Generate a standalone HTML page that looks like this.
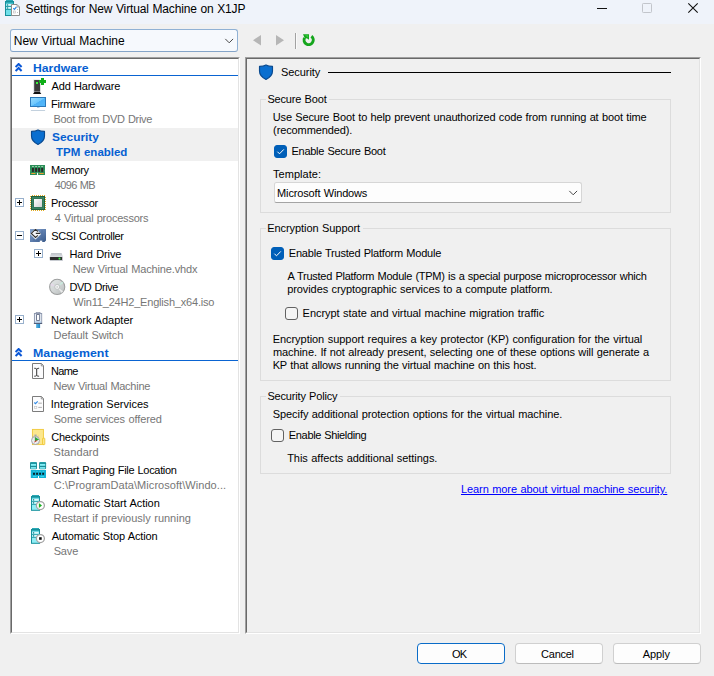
<!DOCTYPE html>
<html lang="en"><head><meta charset="utf-8"><title>Settings for New Virtual Machine on X1JP</title>
<style>
html,body{margin:0;padding:0}
body{width:714px;height:676px;overflow:hidden;background:#f0f0f0;position:relative;font-family:"Liberation Sans",sans-serif;font-size:11px;color:#000}
.t{position:absolute;white-space:nowrap;display:block;font-size:11px;line-height:12px;transform-origin:0 50%;word-spacing:0.5px}
.a{position:absolute;box-sizing:border-box}
.m{color:#000}
.s{color:#767676}
.h{color:#0560d2;font-weight:bold}
.sel{color:#0560d2;font-weight:bold}
.lnk{color:#0000ff;text-decoration:underline}
.ttl{color:#000}
.ex{width:9px;height:9px;border:1px solid #98b0cc;background:#fff}
.ex i{position:absolute;background:#000;display:block}
.ex .hh{left:1px;top:3px;width:5px;height:1px}
.ex .vv{left:3px;top:1px;width:1px;height:5px}
.gb{border:1px solid #dcdcdc}
.gl{background:#f0f0f0}
.cb{width:13px;height:13px;border:1px solid #626262;border-radius:3px;background:#f5f5f5}
.cb.on{background:#005fb8;border-color:#005fb8}
.cb svg{position:absolute;left:-1px;top:-1px}
.btn{background:#fdfdfd;border:1px solid #d0d0d0;border-bottom-color:#bcbcbc;border-radius:4px}

</style></head>
<body>
<!-- title bar -->
<div class="a" style="left:0;top:0;width:714px;height:24px;background:#eff3fa"></div>
<svg class="a" style="left:5px;top:0" width="16" height="16" viewBox="0 0 16 16">
  <rect x="1" y="0" width="7" height="2" fill="#2aa9b5"/>
  <rect x="0.5" y="1.5" width="8" height="14" fill="#6fe0ea" stroke="#17909c"/>
  <rect x="1" y="2" width="7" height="1.5" fill="#2aa9b5"/>
  <rect x="1.5" y="4" width="6" height="1.6" fill="#d8f8fb"/><rect x="2" y="4.4" width="1.2" height="1.2" fill="#0c6a75"/>
  <rect x="1.5" y="7" width="6" height="1.6" fill="#d8f8fb"/><rect x="2" y="7.4" width="1.2" height="1.2" fill="#0c6a75"/>
  <rect x="1" y="6" width="7" height="0.8" fill="#17909c"/><rect x="1" y="9" width="7" height="0.8" fill="#17909c"/>
  <path d="M6.5 4.5h5.5l2.5 2.5v8.5h-8z" fill="#fff" stroke="#8c8c8c"/>
  <path d="M12 4.5v2.5h2.500" fill="none" stroke="#9a9a9a" stroke-width="0.8"/>
  <path d="M8.300 8.200l1.100 1.100l2-2.300" fill="none" stroke="#2f8ae6" stroke-width="1.200"/>
  <rect x="8.500" y="11" width="2" height="2" fill="none" stroke="#c4c4c4" stroke-width="0.7"/>
  <rect x="12" y="9.200" width="1" height="0.8" fill="#b0b0b0"/><rect x="12" y="12" width="1" height="0.8" fill="#b0b0b0"/>
</svg>
<svg class="a" style="left:590px;top:0" width="120" height="20" viewBox="0 0 120 20">
  <rect x="7" y="8" width="10" height="1" fill="#111" shape-rendering="crispEdges"/>
  <rect x="52.500" y="3.500" width="9" height="9" rx="0.800" fill="none" stroke="#c2c5cb"/>
  <path d="M98.300 3.300l9.400 9.400M107.700 3.300l-9.400 9.400" stroke="#111" stroke-width="1.100" fill="none"/>
</svg>

<!-- combobox -->
<div class="a" style="left:10px;top:29px;width:228px;height:23px;background:#f6f9fd;border:1px solid #90b1d4;border-bottom-color:#84a4c8;border-radius:3px"></div>
<svg class="a" style="left:224px;top:37px" width="11" height="8" viewBox="0 0 11 8"><path d="M1.300 1.900l3.900 3.900l3.900-3.900" fill="none" stroke="#484848" stroke-width="1"/></svg>

<!-- toolbar -->
<svg class="a" style="left:250px;top:32px" width="70" height="18" viewBox="0 0 70 18">
  <path d="M11 3v10.500l-8-5.250z" fill="#b6b6b6"/>
  <path d="M26 3v10.500l8-5.250z" fill="#b6b6b6"/>
  <rect x="45" y="1" width="1" height="16" fill="#a2a2a2" shape-rendering="crispEdges"/><rect x="46" y="1" width="1" height="16" fill="#fafafa" shape-rendering="crispEdges"/>
  <path d="M61.400 4.300A4.600 4.600 0 1 1 54.550 5.900" fill="none" stroke="#15a61d" stroke-width="3"/>
  <path d="M53 2.200h6v5.600l-2.200-1.600l-1.800 0.500z" fill="#15a61d"/>
  <path d="M54.800 3.200h3.400v2.500z" fill="#3ddc44" opacity="0.800"/>
</svg>

<!-- panels -->
<div class="a" style="left:10px;top:57px;width:230px;height:577px;background:#fff;border:1px solid #a0a0a0;border-right-color:#fff;border-bottom-color:#fff"></div>
<div class="a" style="left:11px;top:58px;width:228px;height:575px;border:1px solid #696969;border-right-color:#e3e3e3;border-bottom-color:#e3e3e3"></div>
<div class="a" style="left:245px;top:57px;width:456px;height:577px;border:1px solid #a0a0a0;border-right-color:#fff;border-bottom-color:#fff"></div>
<div class="a" style="left:246px;top:58px;width:454px;height:575px;border:1px solid #696969;border-right-color:#e3e3e3;border-bottom-color:#e3e3e3"></div>

<!-- selected row -->
<div class="a" style="left:12px;top:128px;width:226px;height:33px;background:#f0f0f0"></div>

<!-- headers -->
<div class="a" style="left:12px;top:75px;width:226px;height:1px;background:#0a64d2"></div>
<div class="a" style="left:12px;top:360px;width:226px;height:1px;background:#0a64d2"></div>
<svg class="a" style="left:15px;top:63px" width="8" height="9" viewBox="0 0 8 9"><path d="M0.600 4l3-3l3 3M0.600 8l3-3l3 3" fill="none" stroke="#0a57d6" stroke-width="2"/></svg>
<svg class="a" style="left:15px;top:348px" width="8" height="9" viewBox="0 0 8 9"><path d="M0.600 4l3-3l3 3M0.600 8l3-3l3 3" fill="none" stroke="#0a57d6" stroke-width="2"/></svg>

<!-- expanders -->
<div class="a ex" style="left:15px;top:198px"><i class="hh"></i><i class="vv"></i></div>
<div class="a ex" style="left:15px;top:231px"><i class="hh"></i></div>
<div class="a ex" style="left:34px;top:249px"><i class="hh"></i><i class="vv"></i></div>
<div class="a ex" style="left:15px;top:315px"><i class="hh"></i><i class="vv"></i></div>
<!-- Add Hardware -->
<svg class="a" style="left:30px;top:77px" width="18" height="18" viewBox="0 0 18 18">
  <rect x="3.400" y="2.600" width="7" height="12.600" fill="#d6d9e2"/>
  <rect x="4.200" y="3" width="5.900" height="11.600" fill="#3c3c3c"/>
  <path d="M3 17l1.400-1.900h5.500l1.400 1.900z" fill="#121212"/>
  <rect x="6" y="5" width="2" height="2" fill="#3af03e"/>
  <path d="M11 1h3v2h2v3h-2v2h-3v-2h-2v-3h2z" fill="#10ae18"/>
</svg>
<!-- Firmware -->
<svg class="a" style="left:29px;top:96px" width="19" height="17" viewBox="0 0 19 17">
  <defs><linearGradient id="fw" x1="0" y1="0" x2="1" y2="1"><stop offset="0" stop-color="#9adcff"/><stop offset="0.500" stop-color="#6cc6fc"/><stop offset="0.520" stop-color="#4db2f7"/><stop offset="1" stop-color="#56b8f9"/></linearGradient></defs>
  <rect x="1.500" y="1.500" width="15" height="9" fill="url(#fw)" stroke="#2b79ba"/>
  <rect x="8" y="11" width="2.500" height="0.900" fill="#a8c4dc"/>
  <rect x="1.800" y="14" width="14.400" height="1" rx="0.500" fill="#c3d1de"/>
</svg>
<!-- Security shield (tree) -->
<svg class="a" style="left:30px;top:127.500px" width="16" height="18" viewBox="0 0 16 18">
  <path d="M8 1.900C9.800 2.900 12 3.400 14.500 3.400V8C14.500 11.800 11.800 14.600 8 16.400C4.200 14.600 1.500 11.800 1.500 8V3.400C4 3.400 6.200 2.900 8 1.900z" fill="#0a6fd0" stroke="#0a4a90" stroke-width="1.150" stroke-linejoin="round"/>
</svg>
<!-- Memory -->
<svg class="a" style="left:30px;top:164px" width="16" height="12" viewBox="0 0 16 12">
  <path d="M0 1h15v5.500l-0.500 0.400l0.500 0.400v3.700h-6.900v-2.200h-1.100v2.200h-7v-3.700l0.500-0.400l-0.500-0.400z" fill="#2b8d58"/>
  <g fill="#a9d6b4"><rect x="2" y="2.100" width="1.900" height="0.900"/><rect x="5.100" y="2.100" width="1.900" height="0.900"/><rect x="8.100" y="2.100" width="1.900" height="0.900"/><rect x="11.200" y="2.100" width="1.900" height="0.900"/></g>
  <g fill="#2e2428"><rect x="2" y="4" width="1.900" height="3.900"/><rect x="5.100" y="4" width="1.900" height="3.900"/><rect x="8.100" y="4" width="1.900" height="3.900"/><rect x="11.200" y="4" width="1.900" height="3.900"/></g>
  <g fill="#f0a030"><rect x="1.300" y="9" width="4.100" height="1"/><rect x="9.400" y="9" width="4.300" height="1"/></g>
</svg>
<!-- Processor -->
<svg class="a" style="left:30px;top:195px" width="16" height="16" viewBox="0 0 16 16">
  <defs><linearGradient id="cpu" x1="0" y1="0" x2="1" y2="1"><stop offset="0" stop-color="#ffffff"/><stop offset="0.500" stop-color="#e8e8e8"/><stop offset="1" stop-color="#d2d2d2"/></linearGradient></defs>
  <g fill="#e2aa22" shape-rendering="crispEdges"><rect x="2" y="0" width="1" height="1"/><rect x="4" y="0" width="1" height="1"/><rect x="6" y="0" width="1" height="1"/><rect x="8" y="0" width="1" height="1"/><rect x="10" y="0" width="1" height="1"/><rect x="12" y="0" width="1" height="1"/><rect x="14" y="0" width="1" height="1"/><rect x="1" y="15" width="1" height="1"/><rect x="3" y="15" width="1" height="1"/><rect x="5" y="15" width="1" height="1"/><rect x="7" y="15" width="1" height="1"/><rect x="9" y="15" width="1" height="1"/><rect x="11" y="15" width="1" height="1"/><rect x="13" y="15" width="1" height="1"/><rect x="0" y="1" width="1" height="1"/><rect x="0" y="3" width="1" height="1"/><rect x="0" y="5" width="1" height="1"/><rect x="0" y="7" width="1" height="1"/><rect x="0" y="9" width="1" height="1"/><rect x="0" y="11" width="1" height="1"/><rect x="0" y="13" width="1" height="1"/><rect x="15" y="2" width="1" height="1"/><rect x="15" y="4" width="1" height="1"/><rect x="15" y="6" width="1" height="1"/><rect x="15" y="8" width="1" height="1"/><rect x="15" y="10" width="1" height="1"/><rect x="15" y="12" width="1" height="1"/><rect x="15" y="14" width="1" height="1"/></g>
  <rect x="1" y="1" width="14" height="14" fill="#21603f"/>
  <rect x="2" y="2" width="12" height="12" fill="#3a8463"/>
  <rect x="3" y="3" width="10" height="10" fill="#327858"/>
  <rect x="4" y="4" width="8" height="8" fill="url(#cpu)"/>
</svg>
<!-- SCSI -->
<svg class="a" style="left:30px;top:229px" width="16" height="14" viewBox="0 0 16 14">
  <defs><linearGradient id="sc" x1="0" y1="0" x2="1" y2="1"><stop offset="0" stop-color="#86a4d0"/><stop offset="0.600" stop-color="#5878a8"/><stop offset="1" stop-color="#385888"/></linearGradient></defs>
  <path d="M0 0h16v11.500l-1.500 1.500h-2.300v-1.500h-2.400v1.500h-9.800z" fill="url(#sc)"/>
  <path d="M12 1v10h-9" fill="none" stroke="#4a6a9c" stroke-width="0.800" opacity="0.700"/>
  <path d="M5.500 -0.600l5.600 5.600l-5.600 5.600l-5.600-5.600z" fill="#f4f6fa"/>
  <path d="M7.900 2.500l-2.400-2.200l-4.200 4.100l4.200 4.100l2.400-2.200M5.800 4.400h4.500" fill="none" stroke="#303030" stroke-width="1.100"/>
</svg>
<!-- Hard drive -->
<svg class="a" style="left:48px;top:252px" width="17" height="10" viewBox="0 0 17 10">
  <defs><linearGradient id="hd" x1="0" y1="0" x2="0" y2="1"><stop offset="0" stop-color="#bcc0c6"/><stop offset="0.500" stop-color="#dcdfe3"/><stop offset="1" stop-color="#c6cad0"/></linearGradient></defs>
  <path d="M3.200 0.900h10.400l1.400 4v3.400a0.600 0.600 0 0 1 -0.600 0.600h-12a0.600 0.600 0 0 1 -0.600-0.600v-3.400z" fill="url(#hd)"/>
  <rect x="1.900" y="5.100" width="12.200" height="2.900" rx="0.400" fill="#2c2c2c"/>
  <circle cx="11.500" cy="6.550" r="1.500" fill="#30e840" opacity="0.300"/>
  <circle cx="11.500" cy="6.550" r="0.850" fill="#38f048"/>
</svg>
<!-- DVD -->
<svg class="a" style="left:48px;top:278px" width="18" height="18" viewBox="0 0 18 18">
  <defs><linearGradient id="dv" x1="0" y1="0" x2="1" y2="1"><stop offset="0" stop-color="#e4e8e8"/><stop offset="0.500" stop-color="#d2d6d6"/><stop offset="1" stop-color="#b6baba"/></linearGradient></defs>
  <circle cx="9.200" cy="8.900" r="7.600" fill="url(#dv)" stroke="#9c9e9e" stroke-width="1.050"/>
  <path d="M9.200 8.900l-7-1.500a7.500 7.500 0 0 1 1-2.500z" fill="#e8d8ec" opacity="0.700"/>
  <path d="M9.200 8.900l5-5.500a7.500 7.500 0 0 1 1.300 1.500z" fill="#c8f0e0" opacity="0.800"/>
  <path d="M9.200 8.900l4.500 6a7.500 7.500 0 0 0 1.500-1.600z" fill="#f4f4f4" opacity="0.800"/>
  <circle cx="9.200" cy="8.900" r="2.500" fill="#f2f4f4" stroke="#b8baba" stroke-width="0.800"/>
  <circle cx="9.200" cy="8.900" r="0.900" fill="#cfd1d1"/>
</svg>
<!-- Network adapter -->
<svg class="a" style="left:33px;top:312px" width="10" height="17" viewBox="0 0 10 17">
  <defs><linearGradient id="nc" x1="0" y1="0" x2="1" y2="0"><stop offset="0" stop-color="#58b4e4"/><stop offset="1" stop-color="#1c84c4"/></linearGradient></defs>
  <rect x="3.200" y="0.400" width="3.800" height="1.600" fill="#f2f5fa" stroke="#8a94aa" stroke-width="0.800"/>
  <rect x="1.400" y="1.500" width="7.300" height="10" fill="#d2dbec" stroke="#8a94aa" stroke-width="0.900"/>
  <rect x="2" y="2.200" width="1" height="8" fill="#eef2f9"/><rect x="7.100" y="2.200" width="1" height="8" fill="#eef2f9"/>
  <path d="M3.500 2.500v6h3.100v-6z" fill="#fbfcfe" stroke="#667088" stroke-width="0.900"/>
  <rect x="2" y="9.300" width="6.100" height="1.500" fill="#b4d2ec"/>
  <rect x="0.900" y="10.900" width="8.200" height="1.100" fill="#525e7a"/>
  <rect x="3.100" y="12" width="4" height="4" fill="url(#nc)"/>
</svg>
<!-- Name -->
<svg class="a" style="left:32px;top:363px" width="13" height="16" viewBox="0 0 13 16">
  <path d="M0.500 0.500h9l2 2v13h-11z" fill="#fcfcfd" stroke="#7c7c7c"/>
  <path d="M9.300 0.700v2.200h2.200" fill="#fff" stroke="#868686" stroke-width="0.900"/>
  <path d="M2.300 5.300c1.400 0 2.200 0.300 2.400 0.900c0.200-0.600 1-0.900 2.400-0.900M2.300 13.200c1.400 0 2.200-0.300 2.400-0.900c0.200 0.600 1 0.900 2.400 0.900M4.700 6v6.400" fill="none" stroke="#333" stroke-width="1"/>
</svg>
<!-- Integration services -->
<svg class="a" style="left:32px;top:396px" width="13" height="16" viewBox="0 0 13 16">
  <path d="M0.500 0.500h9l2 2v13h-11z" fill="#fcfcfd" stroke="#7c7c7c"/>
  <path d="M9.300 0.700v2.200h2.200" fill="#fff" stroke="#868686" stroke-width="0.900"/>
  <path d="M2.300 6.500l1.200 1.200l2.200-2.400" fill="none" stroke="#2f8ae6" stroke-width="1.150"/>
  <rect x="6.300" y="6.700" width="3.600" height="0.900" fill="#a6a6a6"/>
  <rect x="2.600" y="10.300" width="2.200" height="2.200" fill="none" stroke="#c0c0c0" stroke-width="0.600"/>
  <rect x="6.300" y="10.900" width="3.600" height="0.900" fill="#a6a6a6"/>
</svg>
<!-- Checkpoints -->
<svg class="a" style="left:30px;top:428px" width="17" height="18" viewBox="0 0 17 18">
  <rect x="2.400" y="1.400" width="11" height="15.200" fill="#fce78e" stroke="#f0c838" stroke-width="0.900"/>
  <rect x="12.500" y="10.200" width="2.300" height="6.400" rx="0.500" fill="#fce78e" stroke="#f0c838" stroke-width="0.900"/>
  <path d="M2.300 8l1.500 1.200M8.500 8l-1.500 1.200" stroke="#9aa4b4" stroke-width="0.800"/>
  <rect x="4.400" y="6.600" width="2.200" height="1.300" fill="#98a2b2"/>
  <circle cx="5.500" cy="12.500" r="4" fill="#eceef0" stroke="#9a9ea6" stroke-width="0.900"/>
  <path d="M5.300 9.200l3.800 2.200l-3.800 2.200z" fill="#22b030"/>
  <path d="M5.300 9.200v4.400" stroke="#146a1c" stroke-width="0.600"/>
  <path d="M7.300 12.300l-3 1.800" stroke="#e03030" stroke-width="0.900"/>
</svg>
<!-- Smart paging -->
<svg class="a" style="left:30px;top:462px" width="17" height="17" viewBox="0 0 17 17">
  <rect x="0" y="0" width="7" height="7.200" rx="1.200" fill="#1c8c97"/>
  <rect x="9.100" y="0" width="7" height="7.200" rx="1.200" fill="#1c8c97"/>
  <g fill="#27a6b0"><rect x="0.800" y="0.300" width="5.400" height="1.100"/><rect x="9.900" y="0.300" width="5.400" height="1.100"/></g>
  <g fill="#84f0f8"><rect x="0.900" y="2" width="5.200" height="1.800"/><rect x="0.900" y="5.100" width="5.200" height="1.600"/><rect x="10" y="2" width="5.200" height="1.800"/><rect x="10" y="5.100" width="5.200" height="1.600"/></g>
  <path d="M0.800 8h15.200v8h-7v-2h-1v2h-7.200z" fill="#12b2d4"/>
  <g fill="#06242c"><rect x="3" y="10.800" width="2" height="2"/><rect x="6.100" y="10.800" width="1.900" height="2"/><rect x="9.100" y="10.800" width="1.900" height="2"/><rect x="12.200" y="10.800" width="1.900" height="2"/></g>
  <g fill="#0a90b0"><rect x="3" y="9.700" width="2" height="1.100"/><rect x="6.100" y="9.700" width="1.900" height="1.100"/><rect x="9.100" y="9.700" width="1.900" height="1.100"/><rect x="12.200" y="9.700" width="1.900" height="1.100"/></g>
  <g fill="#3ee2fa"><rect x="3.300" y="9" width="1.400" height="0.700"/><rect x="6.400" y="9" width="1.400" height="0.700"/><rect x="9.400" y="9" width="1.400" height="0.700"/><rect x="12.500" y="9" width="1.400" height="0.700"/><rect x="2.900" y="14.100" width="3.500" height="0.800"/><rect x="10.300" y="14.100" width="3.700" height="0.800"/></g>
</svg>
<!-- Auto start -->
<svg class="a" style="left:30px;top:494px" width="17" height="18" viewBox="0 0 17 18">
  <rect x="2" y="1" width="7" height="1.500" fill="#2aa9b5"/>
  <rect x="1.500" y="2.500" width="8" height="13.800" fill="#90eef6" stroke="#17909c"/>
  <rect x="2" y="3" width="7" height="1.300" fill="#2aa9b5"/>
  <rect x="2.500" y="5" width="6" height="1.500" fill="#d8f8fb"/><rect x="3" y="5.300" width="1.200" height="1.200" fill="#0c6a75"/>
  <rect x="2.500" y="8" width="6" height="1.500" fill="#d8f8fb"/><rect x="3" y="8.300" width="1.200" height="1.200" fill="#0c6a75"/>
  <rect x="2" y="7" width="7" height="0.700" fill="#17909c"/><rect x="2" y="10" width="7" height="0.700" fill="#17909c"/>
  <circle cx="10.400" cy="11.500" r="4" fill="#fff" stroke="#a2a2a2" stroke-width="1.250"/>
  <path d="M8.900 9.100l3.100 2.400l-3.100 2.400z" fill="#1cb024"/>
</svg>
<!-- Auto stop -->
<svg class="a" style="left:30px;top:527px" width="17" height="18" viewBox="0 0 17 18">
  <rect x="2" y="1" width="7" height="1.500" fill="#2aa9b5"/>
  <rect x="1.500" y="2.500" width="8" height="13.800" fill="#90eef6" stroke="#17909c"/>
  <rect x="2" y="3" width="7" height="1.300" fill="#2aa9b5"/>
  <rect x="2.500" y="5" width="6" height="1.500" fill="#d8f8fb"/><rect x="3" y="5.300" width="1.200" height="1.200" fill="#0c6a75"/>
  <rect x="2.500" y="8" width="6" height="1.500" fill="#d8f8fb"/><rect x="3" y="8.300" width="1.200" height="1.200" fill="#0c6a75"/>
  <rect x="2" y="7" width="7" height="0.700" fill="#17909c"/><rect x="2" y="10" width="7" height="0.700" fill="#17909c"/>
  <circle cx="10.400" cy="11.500" r="4" fill="#fff" stroke="#a2a2a2" stroke-width="1.250"/>
  <rect x="9.100" y="10.200" width="2.600" height="2.600" fill="#111"/>
</svg>

<!-- right pane header -->
<svg class="a" style="left:258px;top:62.5px" width="16" height="18" viewBox="0 0 16 18">
  <path d="M8 1.900C9.800 2.900 12 3.400 14.500 3.400V8C14.500 11.800 11.800 14.600 8 16.400C4.200 14.600 1.500 11.800 1.500 8V3.400C4 3.400 6.200 2.900 8 1.900z" fill="#0a6fd0" stroke="#0a4a90" stroke-width="1.150" stroke-linejoin="round"/>
</svg>
<div class="a" style="left:328px;top:72px;width:343px;height:1px;background:#000"></div>
<!-- group boxes -->
<div class="a gb" style="left:260px;top:99px;width:411px;height:114px"></div>
<div class="a gl" style="left:266px;top:97px;width:63px;height:5px"></div>
<div class="a gb" style="left:260px;top:228px;width:411px;height:153px"></div>
<div class="a gl" style="left:266px;top:226px;width:97px;height:5px"></div>
<div class="a gb" style="left:260px;top:396px;width:411px;height:78px"></div>
<div class="a gl" style="left:266px;top:394px;width:74px;height:5px"></div>
<!-- checkboxes -->
<div class="a cb on" style="left:274px;top:145px"><svg width="13" height="13" viewBox="0 0 13 13"><path d="M3.400 6.700l2.100 2.100l4.300-4.400" fill="none" stroke="#fff" stroke-width="1"/></svg></div>
<div class="a cb on" style="left:271px;top:247px"><svg width="13" height="13" viewBox="0 0 13 13"><path d="M3.400 6.700l2.100 2.100l4.300-4.400" fill="none" stroke="#fff" stroke-width="1"/></svg></div>
<div class="a cb" style="left:285px;top:307px"></div>
<div class="a cb" style="left:271px;top:429px"></div>
<!-- template combo -->
<div class="a" style="left:274px;top:182px;width:308px;height:21px;background:#fdfdfd;border:1px solid #d6d6d6;border-bottom-color:#a4a4a4;border-radius:2.5px"></div>
<svg class="a" style="left:568px;top:189px" width="11" height="8" viewBox="0 0 11 8"><path d="M1.300 1.900l3.900 3.900l3.900-3.900" fill="none" stroke="#484848" stroke-width="1"/></svg>
<!-- buttons -->
<div class="a" style="left:417px;top:643px;width:88px;height:21px;background:#fdfdfd;border:1px solid #0a6cc8;border-radius:4px"></div>
<div class="a btn" style="left:515px;top:643px;width:88px;height:21px"></div>
<div class="a btn" style="left:613px;top:643px;width:88px;height:21px"></div>


<span class="t h" style="left:32.88px;top:62px;transform:scaleX(1.1054);">Hardware</span>
<span class="t m" style="left:51.62px;top:80px;letter-spacing:-0.188px;">Add Hardware</span>
<span class="t m" style="left:51.04px;top:98px;letter-spacing:-0.220px;">Firmware</span>
<span class="t s" style="left:53.47px;top:113px;letter-spacing:-0.292px;">Boot from DVD Drive</span>
<span class="t sel" style="left:52.28px;top:131px;transform:scaleX(1.0808);">Security</span>
<span class="t sel" style="left:55.97px;top:146px;transform:scaleX(1.0446);">TPM enabled</span>
<span class="t m" style="left:51.03px;top:164px;letter-spacing:-0.343px;">Memory</span>
<span class="t s" style="left:54.65px;top:179px;letter-spacing:-0.576px;">4096 MB</span>
<span class="t m" style="left:51.02px;top:197px;letter-spacing:-0.301px;">Processor</span>
<span class="t s" style="left:54.79px;top:212px;letter-spacing:-0.226px;">4 Virtual processors</span>
<span class="t m" style="left:51.16px;top:230px;letter-spacing:-0.289px;">SCSI Controller</span>
<span class="t m" style="left:69.51px;top:248px;letter-spacing:-0.134px;">Hard Drive</span>
<span class="t s" style="left:72.69px;top:263px;letter-spacing:-0.135px;">New Virtual Machine.vhdx</span>
<span class="t m" style="left:69.44px;top:281px;letter-spacing:-0.425px;">DVD Drive</span>
<span class="t s" style="left:73.37px;top:296px;letter-spacing:-0.194px;">Win11_24H2_English_x64.iso</span>
<span class="t m" style="left:51.03px;top:314px;letter-spacing:0.030px;">Network Adapter</span>
<span class="t s" style="left:53.62px;top:329px;letter-spacing:-0.080px;">Default Switch</span>
<span class="t h" style="left:32.82px;top:347px;transform:scaleX(1.1228);">Management</span>
<span class="t m" style="left:51.02px;top:365px;letter-spacing:-0.656px;">Name</span>
<span class="t s" style="left:53.47px;top:380px;letter-spacing:-0.266px;">New Virtual Machine</span>
<span class="t m" style="left:50.74px;top:398px;letter-spacing:0.007px;">Integration Services</span>
<span class="t s" style="left:53.63px;top:413px;letter-spacing:-0.100px;">Some services offered</span>
<span class="t m" style="left:51.27px;top:431px;letter-spacing:-0.229px;">Checkpoints</span>
<span class="t s" style="left:53.57px;top:446px;letter-spacing:0.070px;">Standard</span>
<span class="t m" style="left:51.16px;top:464px;letter-spacing:-0.312px;">Smart Paging File Location</span>
<span class="t s" style="left:53.80px;top:479px;letter-spacing:0.053px;">C:\ProgramData\Microsoft\Windo...</span>
<span class="t m" style="left:51.65px;top:497px;letter-spacing:-0.050px;">Automatic Start Action</span>
<span class="t s" style="left:53.47px;top:512px;letter-spacing:-0.016px;">Restart if previously running</span>
<span class="t m" style="left:51.67px;top:530px;letter-spacing:-0.132px;">Automatic Stop Action</span>
<span class="t s" style="left:53.63px;top:545px;letter-spacing:-0.124px;">Save</span>
<span class="t ttl" style="left:25.57px;top:2px;font-size:12px;line-height:14px;letter-spacing:-0.145px;">Settings for New Virtual Machine on X1JP</span>
<span class="t m" style="left:13.72px;top:34px;font-size:12px;line-height:14px;letter-spacing:0.007px;">New Virtual Machine</span>
<span class="t m" style="left:280.95px;top:66px;letter-spacing:-0.046px;">Security</span>
<span class="t m" style="left:267.45px;top:93px;letter-spacing:-0.179px;">Secure Boot</span>
<span class="t m" style="left:272.72px;top:111px;letter-spacing:-0.135px;">Use Secure Boot to help prevent unauthorized code from running at boot time</span>
<span class="t m" style="left:273.11px;top:124px;letter-spacing:-0.112px;">(recommended).</span>
<span class="t m" style="left:291.47px;top:145px;letter-spacing:-0.268px;">Enable Secure Boot</span>
<span class="t m" style="left:273.04px;top:168px;letter-spacing:0.037px;">Template:</span>
<span class="t m" style="left:277.12px;top:187px;letter-spacing:-0.161px;">Microsoft Windows</span>
<span class="t m" style="left:267.26px;top:222px;letter-spacing:-0.068px;">Encryption Support</span>
<span class="t m" style="left:288.82px;top:247px;letter-spacing:-0.211px;">Enable Trusted Platform Module</span>
<span class="t m" style="left:287.43px;top:270px;letter-spacing:-0.257px;">A Trusted Platform Module (TPM) is a special purpose microprocessor which</span>
<span class="t m" style="left:287.15px;top:283px;letter-spacing:-0.076px;">provides cryptographic services to a compute platform.</span>
<span class="t m" style="left:302.60px;top:307px;letter-spacing:-0.043px;">Encrypt state and virtual machine migration traffic</span>
<span class="t m" style="left:272.68px;top:333px;letter-spacing:-0.045px;">Encryption support requires a key protector (KP) configuration for the virtual</span>
<span class="t m" style="left:272.95px;top:346px;letter-spacing:-0.083px;">machine. If not already present, selecting one of these options will generate a</span>
<span class="t m" style="left:272.68px;top:359px;letter-spacing:-0.138px;">KP that allows running the virtual machine on this host.</span>
<span class="t m" style="left:267.39px;top:390px;letter-spacing:-0.173px;">Security Policy</span>
<span class="t m" style="left:272.74px;top:408px;letter-spacing:-0.071px;">Specify additional protection options for the virtual machine.</span>
<span class="t m" style="left:288.87px;top:429px;letter-spacing:-0.348px;">Enable Shielding</span>
<span class="t m" style="left:287.17px;top:452px;letter-spacing:-0.045px;">This affects additional settings.</span>
<span class="t lnk" style="left:460.99px;top:483px;letter-spacing:-0.077px;">Learn more about virtual machine security.</span>
<span class="t m" style="left:452.09px;top:648px;letter-spacing:-0.849px;">OK</span>
<span class="t m" style="left:541.11px;top:648px;letter-spacing:-0.270px;">Cancel</span>
<span class="t m" style="left:642.70px;top:648px;letter-spacing:-0.069px;">Apply</span>
</body></html>
